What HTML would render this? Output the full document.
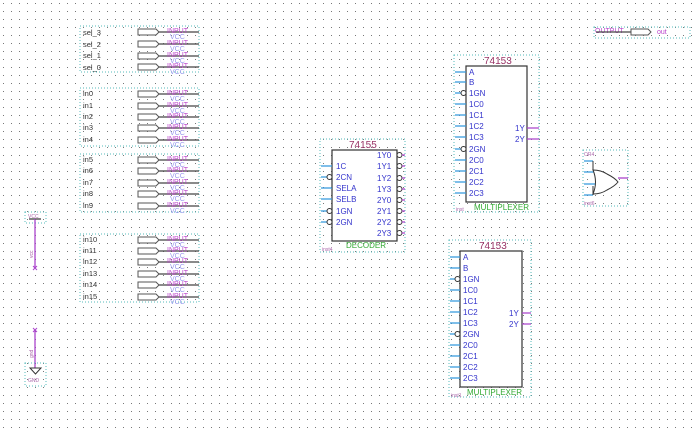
<!DOCTYPE html>
<html><head><meta charset="utf-8"><style>
html,body{margin:0;padding:0;background:#fff;width:695px;height:435px;overflow:hidden}
svg{display:block;font-family:"Liberation Sans",sans-serif}
.d{fill:none;stroke:#5bb;stroke-width:1;stroke-dasharray:1 2}
.w{stroke:#444;stroke-width:1.3}
.p{fill:#fff;stroke:#555;stroke-width:1}
.lb{font-size:7.5px;fill:#333}
.it{font-size:7px;fill:#b4c}
.vc{font-size:7px;fill:#99e}
.pn{font-size:8px;fill:#33c}
.bl{stroke:#39d;stroke-width:1.3}
.pu{stroke:#a4c;stroke-width:1.3}
.ch{fill:#fff;stroke:#333;stroke-width:1.2}
.tt{font-size:10px;fill:#936}
.gr{font-size:8px;fill:#3a3}
.sm{font-size:5px;fill:#a6a}
</style></head><body>
<svg width="695" height="435" viewBox="0 0 695 435">
<defs><pattern id="g" width="8" height="8" patternUnits="userSpaceOnUse"><rect x="3" y="3" width="1" height="1" fill="#777"/></pattern></defs>
<rect width="695" height="435" fill="url(#g)"/>

<rect x="80" y="26" width="119" height="46" fill="#fff" class="d"/>
<text x="83" y="35" class="lb">sel_3</text><path class="w" d="M158 32H199"/><path class="p" d="M138 29h18l3 3l-3 3h-18z"/><text x="167" y="33" class="it">INPUT</text><text x="170" y="39" class="vc">VCC</text>
<text x="83" y="47" class="lb">sel_2</text><path class="w" d="M158 44H199"/><path class="p" d="M138 41h18l3 3l-3 3h-18z"/><text x="167" y="45" class="it">INPUT</text><text x="170" y="51" class="vc">VCC</text>
<text x="83" y="58" class="lb">sel_1</text><path class="w" d="M158 56H199"/><path class="p" d="M138 53h18l3 3l-3 3h-18z"/><text x="167" y="57" class="it">INPUT</text><text x="170" y="63" class="vc">VCC</text>
<text x="83" y="70" class="lb">sel_0</text><path class="w" d="M158 67H199"/><path class="p" d="M138 64h18l3 3l-3 3h-18z"/><text x="167" y="68" class="it">INPUT</text><text x="170" y="74" class="vc">VCC</text>

<rect x="80" y="88" width="119" height="58" fill="#fff" class="d"/>
<text x="83" y="96" class="lb">in0</text><path class="w" d="M158 94H199"/><path class="p" d="M138 91h18l3 3l-3 3h-18z"/><text x="167" y="95" class="it">INPUT</text><text x="170" y="101" class="vc">VCC</text>
<text x="83" y="108" class="lb">in1</text><path class="w" d="M158 106H199"/><path class="p" d="M138 103h18l3 3l-3 3h-18z"/><text x="167" y="107" class="it">INPUT</text><text x="170" y="113" class="vc">VCC</text>
<text x="83" y="119" class="lb">in2</text><path class="w" d="M158 117H199"/><path class="p" d="M138 114h18l3 3l-3 3h-18z"/><text x="167" y="118" class="it">INPUT</text><text x="170" y="124" class="vc">VCC</text>
<text x="83" y="130" class="lb">in3</text><path class="w" d="M158 128H199"/><path class="p" d="M138 125h18l3 3l-3 3h-18z"/><text x="167" y="129" class="it">INPUT</text><text x="170" y="135" class="vc">VCC</text>
<text x="83" y="142" class="lb">in4</text><path class="w" d="M158 140H199"/><path class="p" d="M138 137h18l3 3l-3 3h-18z"/><text x="167" y="141" class="it">INPUT</text><text x="170" y="147" class="vc">VCC</text>

<rect x="80" y="154" width="119" height="58" fill="#fff" class="d"/>
<text x="83" y="162" class="lb">in5</text><path class="w" d="M158 160H199"/><path class="p" d="M138 157h18l3 3l-3 3h-18z"/><text x="167" y="161" class="it">INPUT</text><text x="170" y="167" class="vc">VCC</text>
<text x="83" y="173" class="lb">in6</text><path class="w" d="M158 171H199"/><path class="p" d="M138 168h18l3 3l-3 3h-18z"/><text x="167" y="172" class="it">INPUT</text><text x="170" y="178" class="vc">VCC</text>
<text x="83" y="185" class="lb">in7</text><path class="w" d="M158 183H199"/><path class="p" d="M138 180h18l3 3l-3 3h-18z"/><text x="167" y="184" class="it">INPUT</text><text x="170" y="190" class="vc">VCC</text>
<text x="83" y="196" class="lb">in8</text><path class="w" d="M158 194H199"/><path class="p" d="M138 191h18l3 3l-3 3h-18z"/><text x="167" y="195" class="it">INPUT</text><text x="170" y="201" class="vc">VCC</text>
<text x="83" y="208" class="lb">in9</text><path class="w" d="M158 206H199"/><path class="p" d="M138 203h18l3 3l-3 3h-18z"/><text x="167" y="207" class="it">INPUT</text><text x="170" y="213" class="vc">VCC</text>

<rect x="80" y="234" width="119" height="68" fill="#fff" class="d"/>
<text x="83" y="242" class="lb">in10</text><path class="w" d="M158 240H199"/><path class="p" d="M138 237h18l3 3l-3 3h-18z"/><text x="167" y="241" class="it">INPUT</text><text x="170" y="247" class="vc">VCC</text>
<text x="83" y="253" class="lb">in11</text><path class="w" d="M158 251H199"/><path class="p" d="M138 248h18l3 3l-3 3h-18z"/><text x="167" y="252" class="it">INPUT</text><text x="170" y="258" class="vc">VCC</text>
<text x="83" y="264" class="lb">in12</text><path class="w" d="M158 262H199"/><path class="p" d="M138 259h18l3 3l-3 3h-18z"/><text x="167" y="263" class="it">INPUT</text><text x="170" y="269" class="vc">VCC</text>
<text x="83" y="276" class="lb">in13</text><path class="w" d="M158 274H199"/><path class="p" d="M138 271h18l3 3l-3 3h-18z"/><text x="167" y="275" class="it">INPUT</text><text x="170" y="281" class="vc">VCC</text>
<text x="83" y="287" class="lb">in14</text><path class="w" d="M158 285H199"/><path class="p" d="M138 282h18l3 3l-3 3h-18z"/><text x="167" y="286" class="it">INPUT</text><text x="170" y="292" class="vc">VCC</text>
<text x="83" y="299" class="lb">in15</text><path class="w" d="M158 297H199"/><path class="p" d="M138 294h18l3 3l-3 3h-18z"/><text x="167" y="298" class="it">INPUT</text><text x="170" y="304" class="vc">VCC</text>

<rect x="25" y="212" width="21" height="11" fill="#fff" class="d"/>
<text x="28" y="218" class="sm">VCC</text>
<path d="M29 219h12" stroke="#333" stroke-width="1.2"/>
<path d="M35 219V268" class="pu"/>
<path d="M33 266l4 4M37 266l-4 4" stroke="#a4c"/>
<text x="33" y="258" class="sm" transform="rotate(-90 33 258)">vcc</text>
<path d="M35 330V372" class="pu"/>
<path d="M33 328l4 4M37 328l-4 4" stroke="#a4c"/>
<text x="33" y="358" class="sm" transform="rotate(-90 33 358)">gnd</text>
<rect x="25" y="363" width="21" height="23" fill="#fff" class="d"/>
<path d="M30 368h11l-5.5 6z" fill="#fff" stroke="#333"/>
<text x="28" y="382" class="sm">GND</text>

<rect x="320" y="139" width="85" height="113" class="d" fill="#fff"/>
<text x="349" y="148" class="tt">74155</text>
<rect x="332" y="150" width="65" height="91" class="ch"/>
<path class="bl" d="M321 166h11M321 188h11M321 199h11M321 177h6M321 211h6M321 222h6"/>
<circle cx="329.5" cy="177" r="2.5" fill="#fff" stroke="#333"/>
<circle cx="329.5" cy="211" r="2.5" fill="#fff" stroke="#333"/>
<circle cx="329.5" cy="222" r="2.5" fill="#fff" stroke="#333"/>
<g class="pn"><text x="336" y="169">1C</text><text x="336" y="180">2CN</text><text x="336" y="191">SELA</text><text x="336" y="202">SELB</text><text x="336" y="214">1GN</text><text x="336" y="225">2GN</text>
<text x="377" y="158">1Y0</text><text x="377" y="169">1Y1</text><text x="377" y="181">1Y2</text><text x="377" y="192">1Y3</text><text x="377" y="203">2Y0</text><text x="377" y="214">2Y1</text><text x="377" y="225">2Y2</text><text x="377" y="236">2Y3</text></g>
<g fill="#fff" stroke="#333"><circle cx="399.5" cy="155" r="2.5"/><circle cx="399.5" cy="166" r="2.5"/><circle cx="399.5" cy="178" r="2.5"/><circle cx="399.5" cy="189" r="2.5"/><circle cx="399.5" cy="200" r="2.5"/><circle cx="399.5" cy="211" r="2.5"/><circle cx="399.5" cy="222" r="2.5"/><circle cx="399.5" cy="233" r="2.5"/></g>
<path class="pu" d="M402 155h3M402 166h3M402 178h3M402 189h3M402 200h3M402 211h3M402 222h3M402 233h3"/>
<text x="346" y="248" class="gr">DECODER</text>
<text x="322" y="251" class="sm">inst4</text>

<rect x="454" y="55" width="85" height="157" class="d" fill="#fff"/>
<text x="484" y="64" class="tt">74153</text>
<rect x="466" y="66" width="61" height="136" class="ch"/>
<path class="bl" d="M455 72h11M455 82h11M455 93h6M455 104h11M455 115h11M455 126h11M455 137h11M455 149h6M455 160h11M455 171h11M455 182h11M455 193h11"/>
<circle cx="463.5" cy="93" r="2.5" fill="#fff" stroke="#333"/><circle cx="463.5" cy="149" r="2.5" fill="#fff" stroke="#333"/>
<g class="pn"><text x="469" y="75">A</text><text x="469" y="85">B</text><text x="469" y="96">1GN</text><text x="469" y="107">1C0</text><text x="469" y="118">1C1</text><text x="469" y="129">1C2</text><text x="469" y="140">1C3</text><text x="469" y="152">2GN</text><text x="469" y="163">2C0</text><text x="469" y="174">2C1</text><text x="469" y="185">2C2</text><text x="469" y="196">2C3</text>
<text x="515" y="131">1Y</text><text x="515" y="142">2Y</text></g>
<path class="pu" d="M527 128h12M527 139h12"/>
<text x="474" y="210" class="gr">MULTIPLEXER</text>
<text x="456" y="211" class="sm">inst</text>

<rect x="449" y="240" width="82" height="157" class="d" fill="#fff"/>
<text x="479" y="249" class="tt">74153</text>
<rect x="460" y="251" width="62" height="136" class="ch"/>
<path class="bl" d="M450 257h10M450 268h10M450 279h6M450 290h10M450 301h10M450 312h10M450 323h10M450 334h6M450 345h10M450 356h10M450 367h10M450 378h10"/>
<circle cx="457.5" cy="279" r="2.5" fill="#fff" stroke="#333"/><circle cx="457.5" cy="334" r="2.5" fill="#fff" stroke="#333"/>
<g class="pn"><text x="463" y="260">A</text><text x="463" y="271">B</text><text x="463" y="282">1GN</text><text x="463" y="293">1C0</text><text x="463" y="304">1C1</text><text x="463" y="315">1C2</text><text x="463" y="326">1C3</text><text x="463" y="337">2GN</text><text x="463" y="348">2C0</text><text x="463" y="359">2C1</text><text x="463" y="370">2C2</text><text x="463" y="381">2C3</text>
<text x="509" y="316">1Y</text><text x="509" y="327">2Y</text></g>
<path class="pu" d="M522 313h9M522 324h9"/>
<text x="467" y="395" class="gr">MULTIPLEXER</text>
<text x="451" y="397" class="sm">inst1</text>

<rect x="583" y="150" width="45" height="56" class="d" fill="#fff"/>
<text x="584" y="156" class="sm">OR4</text>
<path class="bl" d="M584 161h9M584 172h13M584 184h13M584 195h9"/>
<path d="M593 161v9M593 186v9" stroke="#333"/>
<path d="M593 170q8 0 14 4q8 4 11 8q-3 4-11 8q-6 4-14 4q5-12 0-24z" fill="#fff" stroke="#333"/>
<path class="pu" d="M618 178h10"/>
<text x="584" y="205" class="sm">inst6</text>

<rect x="594" y="27" width="96" height="11" class="d" fill="#fff"/>
<text x="595" y="33" class="it">OUTPUT</text>
<path class="w" d="M596 32H631"/>
<path class="p" d="M631 29h17l3 3l-3 3h-17z"/>
<text x="657" y="34" class="it">out</text>
</svg>
</body></html>
